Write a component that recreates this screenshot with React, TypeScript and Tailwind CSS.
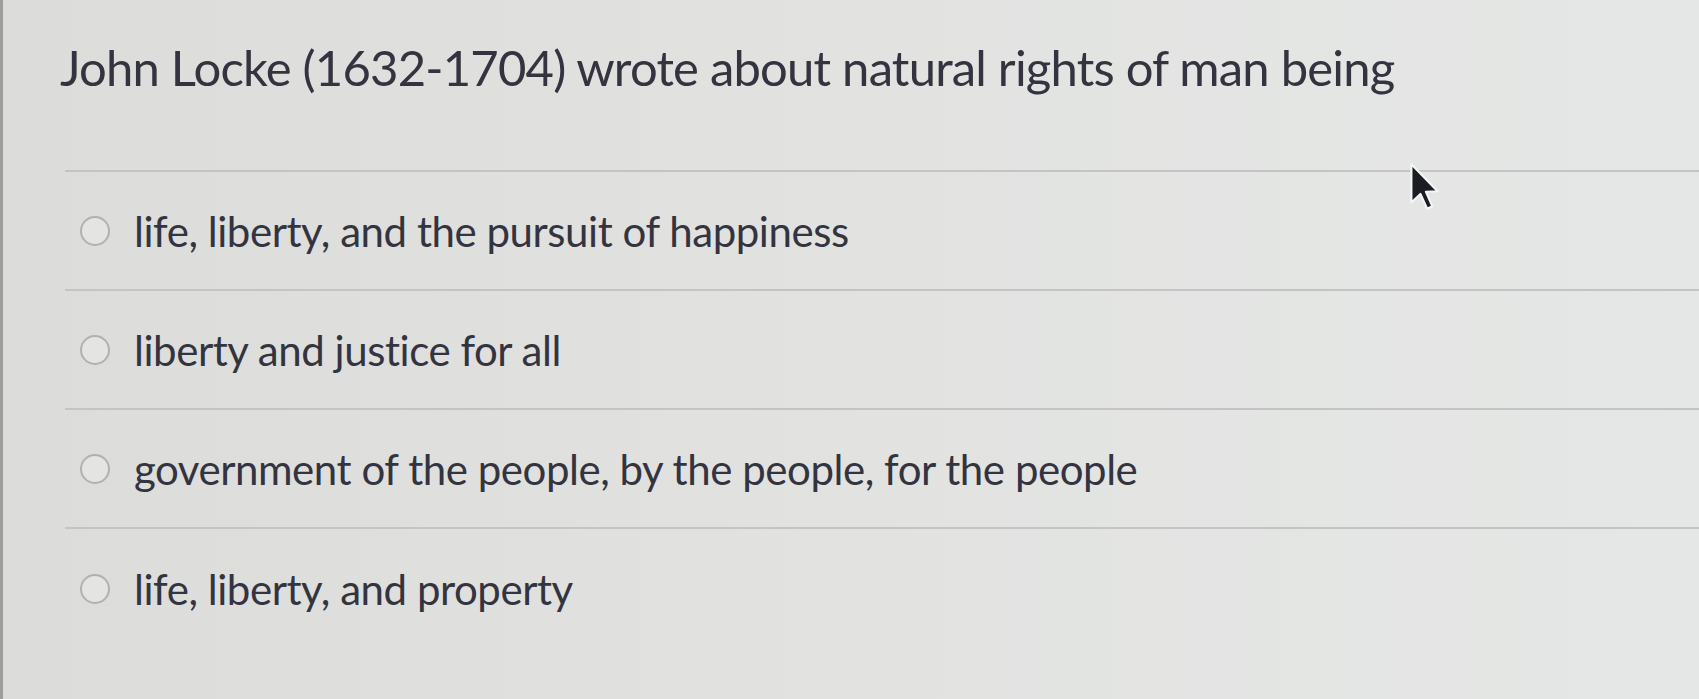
import React from "react";

const options = [
  "life, liberty, and the pursuit of happiness",
  "liberty and justice for all",
  "government of the people, by the people, for the people",
  "life, liberty, and property",
];

function Cursor() {
  return (
    <svg
      className="absolute left-[1406px] top-[160px]"
      width="31"
      height="54"
      viewBox="-1 -1 13 21"
    >
      <path
        d="M0 0 L0 16 L3.8 12.4 L6.6 18.6 L8.8 17.6 L6.1 11.5 L11 11.3 Z"
        fill="#1b1d22"
        stroke="#f4f6f6"
        strokeWidth="0.9"
        strokeLinejoin="round"
      />
    </svg>
  );
}

export default function App() {
  return (
    <div
      className="relative w-[1699px] h-[699px] overflow-hidden bg-linear-to-r from-[#dcdcda] via-[#e2e3e1] to-[#e5e7e6] border-l-[3px] border-[#9c9d9c] text-[#33343f]"
      style={{ fontFamily: "Lato, 'Open Sans', sans-serif" }}
    >
      <h1 className="pl-[57px] pt-[35px] text-[49px] leading-[64px] font-normal tracking-[-0.8px]">
        John Locke (1632-1704) wrote about natural rights of man being
      </h1>
      <div className="ml-[62px] mt-[71px] border-t-2 border-[#c3c4c3]">
        {options.map((text, i) => (
          <div
            key={text}
            className={
              i < options.length - 1
                ? "h-[119px] flex items-center border-b-2 border-[#c3c4c3]"
                : "h-[119px] flex items-center"
            }
          >
            <span className="ml-[15px] w-[30px] h-[30px] rounded-full border-2 border-[#b0b1b0] bg-[#e4e4e3] shrink-0" />
            <span className="ml-[24px] text-[42px] leading-none tracking-[-0.45px]">
              {text}
            </span>
          </div>
        ))}
      </div>
      <Cursor />
    </div>
  );
}
